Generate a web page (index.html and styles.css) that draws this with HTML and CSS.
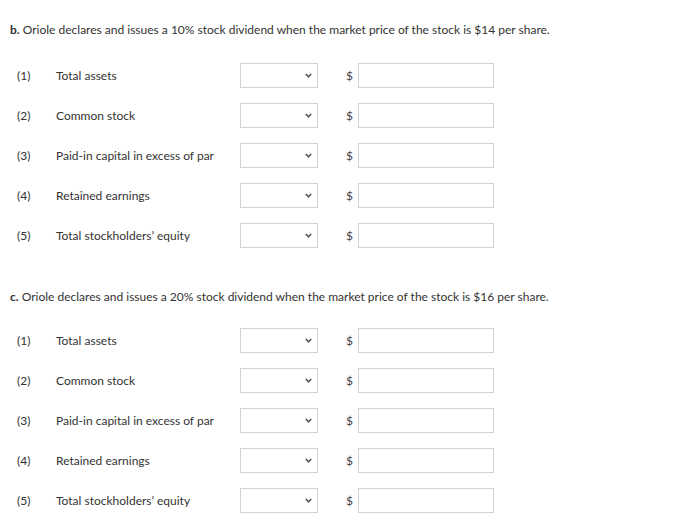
FILE: index.html
```html
<!DOCTYPE html>
<html>
<head>
<meta charset="utf-8">
<link rel="stylesheet" href="styles.css">
</head>
<body>
<div class="page">
  <section class="part">
    <p class="title"><b>b.</b> Oriole declares and issues a 10% stock dividend when the market price of the stock is $14 per share.</p>
    <div class="rows">
      <div class="row"><span class="num">(1)</span><span class="label">Total assets</span><span class="select"><svg class="chev" width="7" height="5" viewBox="0 0 7 5"><path d="M0.8 1 L3.5 3.8 L6.2 1" fill="none" stroke="#555" stroke-width="1.6"/></svg></span><span class="dollar">$</span><span class="input"></span></div>
      <div class="row"><span class="num">(2)</span><span class="label">Common stock</span><span class="select"><svg class="chev" width="7" height="5" viewBox="0 0 7 5"><path d="M0.8 1 L3.5 3.8 L6.2 1" fill="none" stroke="#555" stroke-width="1.6"/></svg></span><span class="dollar">$</span><span class="input"></span></div>
      <div class="row"><span class="num">(3)</span><span class="label">Paid-in capital in excess of par</span><span class="select"><svg class="chev" width="7" height="5" viewBox="0 0 7 5"><path d="M0.8 1 L3.5 3.8 L6.2 1" fill="none" stroke="#555" stroke-width="1.6"/></svg></span><span class="dollar">$</span><span class="input"></span></div>
      <div class="row"><span class="num">(4)</span><span class="label">Retained earnings</span><span class="select"><svg class="chev" width="7" height="5" viewBox="0 0 7 5"><path d="M0.8 1 L3.5 3.8 L6.2 1" fill="none" stroke="#555" stroke-width="1.6"/></svg></span><span class="dollar">$</span><span class="input"></span></div>
      <div class="row"><span class="num">(5)</span><span class="label">Total stockholders’ equity</span><span class="select"><svg class="chev" width="7" height="5" viewBox="0 0 7 5"><path d="M0.8 1 L3.5 3.8 L6.2 1" fill="none" stroke="#555" stroke-width="1.6"/></svg></span><span class="dollar">$</span><span class="input"></span></div>
    </div>
  </section>
  <section class="part part-c">
    <p class="title"><b>c.</b> Oriole declares and issues a 20% stock dividend when the market price of the stock is $16 per share.</p>
    <div class="rows">
      <div class="row"><span class="num">(1)</span><span class="label">Total assets</span><span class="select"><svg class="chev" width="7" height="5" viewBox="0 0 7 5"><path d="M0.8 1 L3.5 3.8 L6.2 1" fill="none" stroke="#555" stroke-width="1.6"/></svg></span><span class="dollar">$</span><span class="input"></span></div>
      <div class="row"><span class="num">(2)</span><span class="label">Common stock</span><span class="select"><svg class="chev" width="7" height="5" viewBox="0 0 7 5"><path d="M0.8 1 L3.5 3.8 L6.2 1" fill="none" stroke="#555" stroke-width="1.6"/></svg></span><span class="dollar">$</span><span class="input"></span></div>
      <div class="row"><span class="num">(3)</span><span class="label">Paid-in capital in excess of par</span><span class="select"><svg class="chev" width="7" height="5" viewBox="0 0 7 5"><path d="M0.8 1 L3.5 3.8 L6.2 1" fill="none" stroke="#555" stroke-width="1.6"/></svg></span><span class="dollar">$</span><span class="input"></span></div>
      <div class="row"><span class="num">(4)</span><span class="label">Retained earnings</span><span class="select"><svg class="chev" width="7" height="5" viewBox="0 0 7 5"><path d="M0.8 1 L3.5 3.8 L6.2 1" fill="none" stroke="#555" stroke-width="1.6"/></svg></span><span class="dollar">$</span><span class="input"></span></div>
      <div class="row"><span class="num">(5)</span><span class="label">Total stockholders’ equity</span><span class="select"><svg class="chev" width="7" height="5" viewBox="0 0 7 5"><path d="M0.8 1 L3.5 3.8 L6.2 1" fill="none" stroke="#555" stroke-width="1.6"/></svg></span><span class="dollar">$</span><span class="input"></span></div>
    </div>
  </section>
</div>
</body>
</html>
```
FILE: styles.css
```css
html, body {
  margin: 0;
  padding: 0;
  background: #fff;
}
body {
  font-family: Lato, "Liberation Sans", sans-serif;
  font-size: 12px;
  color: #333;
}
.page {
  padding: 21px 0 0 10px;
}
.title {
  margin: 0;
  line-height: 18px;
  color: #333;
}
.title b {
  font-weight: 700;
}
.rows {
  margin-top: 16px;
  padding-left: 7px;
}
.part-c {
  margin-top: 33px;
}
.part-c .rows {
  margin-top: 14px;
}
.row {
  display: flex;
  align-items: center;
  height: 40px;
}
.num {
  width: 39px;
}
.label {
  width: 184px;
}
.select {
  box-sizing: border-box;
  width: 78px;
  height: 25px;
  border: 1px solid #d4d4d4;
  display: flex;
  align-items: center;
  justify-content: flex-end;
  padding-right: 5px;
}
.chev {
  display: block;
}
.dollar {
  margin-left: 28px;
  width: 12px;
  color: #444;
}
.input {
  box-sizing: border-box;
  width: 136px;
  height: 25px;
  border: 1px solid #d4d4d4;
}
```
